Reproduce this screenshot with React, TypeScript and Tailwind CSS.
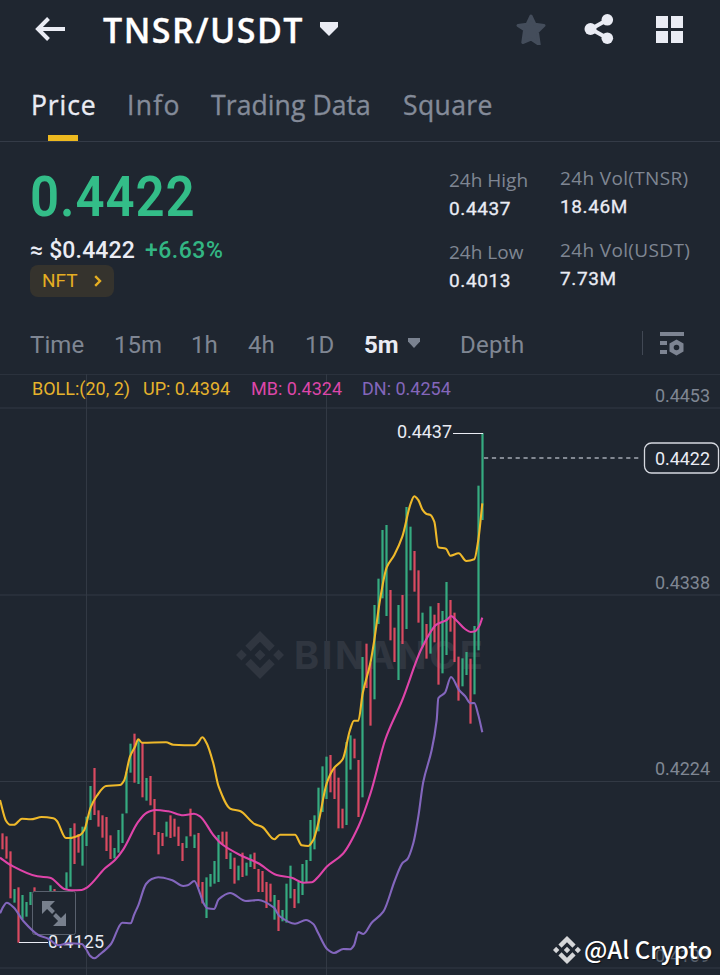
import React from "react";

type Candle = [up: 0 | 1, top: number, bottom: number];

// Candle extents in thirds of a pixel, measured from y = 720.
const EARLY: Record<number, Candle> = {
  0: [0, 340, 388], 1: [0, 349, 416], 2: [0, 394, 535], 3: [1, 507, 548], 4: [0, 502, 668],
  5: [1, 525, 598], 6: [1, 546, 590], 7: [1, 516, 555], 8: [0, 502, 530], 12: [1, 496, 520],
  13: [0, 507, 520], 16: [1, 457, 510], 17: [1, 324, 500], 18: [0, 310, 432], 19: [0, 342, 398],
  20: [1, 320, 437], 21: [1, 290, 378], 22: [1, 198, 300], 23: [0, 144, 285], 24: [0, 271, 320],
  25: [0, 286, 353], 26: [0, 291, 393], 27: [0, 346, 417], 28: [1, 384, 415], 29: [1, 330, 398],
  30: [1, 281, 369], 31: [1, 155, 280], 32: [1, 71, 158], 33: [0, 41, 188], 34: [1, 60, 192],
  35: [0, 66, 232], 36: [1, 174, 242], 37: [0, 168, 256], 38: [0, 237, 345], 39: [0, 336, 403],
  40: [0, 339, 378], 41: [1, 305, 350], 42: [0, 286, 354], 43: [0, 296, 350], 44: [0, 320, 378],
  45: [0, 369, 423], 46: [1, 349, 384], 47: [0, 266, 349], 48: [1, 344, 384], 49: [0, 339, 502],
  50: [0, 486, 550], 51: [1, 472, 594], 52: [1, 462, 500], 53: [1, 423, 491], 54: [1, 345, 486],
  55: [0, 335, 373], 56: [0, 335, 417], 57: [1, 398, 447], 58: [0, 413, 491], 59: [1, 437, 481],
  60: [0, 398, 471], 61: [1, 428, 467], 62: [1, 403, 441], 63: [0, 398, 447], 64: [0, 447, 516],
  65: [0, 453, 516], 66: [0, 486, 564], 67: [0, 491, 545], 68: [1, 525, 599], 69: [0, 540, 633],
  70: [1, 570, 604], 71: [1, 491, 608], 72: [1, 437, 535], 73: [0, 507, 564], 74: [1, 486, 550],
  75: [1, 432, 525], 76: [1, 420, 486], 77: [1, 300, 423], 78: [1, 286, 388], 79: [1, 203, 334],
  80: [1, 139, 276], 81: [1, 110, 237], 82: [0, 105, 217], 83: [0, 144, 237], 84: [0, 173, 325],
  85: [0, 266, 325], 86: [1, 66, 315], 87: [1, 46, 149], 88: [0, 56, 115], 89: [0, 120, 291],
  90: [1, -189, 232],
};

// Candle extents in thirds of a pixel, measured from y = 480.
const LATE: Record<number, Candle> = {
  91: [0, 491, 624], 92: [0, 550, 737], 93: [1, 375, 658], 94: [1, 296, 432], 95: [1, 150, 355],
  96: [1, 135, 408], 97: [0, 330, 481], 98: [0, 443, 546], 99: [1, 375, 600], 100: [0, 345, 492],
  101: [1, 81, 447], 102: [1, 140, 271], 103: [0, 213, 335], 104: [0, 271, 428], 105: [1, 398, 500],
  106: [0, 432, 536], 107: [1, 379, 521], 108: [0, 404, 487], 109: [0, 369, 614], 110: [1, 393, 580],
  111: [1, 306, 525], 112: [0, 360, 455], 113: [0, 398, 546], 114: [0, 530, 662], 115: [1, 535, 619],
  116: [1, 516, 585], 117: [0, 536, 731], 118: [1, 438, 643], 119: [1, 17, 511], 120: [1, -141, 120],
};

const UPPER =
  "0,800 6,820.7 10,824.7 14,824.7 22,818.7 30.7,819.3 41.7,817 53.3,818.3 56.7,820.7 66,838 69.3,838 80,835 84.3,830 90.7,807.3 96.7,796 106,786 120,785 124,780.7 130,756.7 135,746.7 138.3,739.3 142,742.7 166,742.3 173.3,744.7 194.3,745.3 198,742.7 202.3,737.3 206.7,743.3 213.3,763.3 218.7,786.7 230.3,808.7 240,811 255,824.3 262.3,827 274.3,839.3 280,834.7 295,834.7 301.7,845.3 308.3,846 313.3,840 318.3,823.3 326.7,783.3 334.3,767.7 342.7,759.3 350,730 354,720.7 358.3,720.7 362.7,693.3 370.3,663.3 374.3,640 380,600 386.7,567.3 394.3,555 402.3,536.7 410.7,503.3 414.3,496.3 418.3,500 422.3,509.3 426.7,514 430,514.7 434.3,521.7 438.3,547.3 446,548.7 450.3,555.7 458.7,553.3 466.3,561 474.3,559.3 478.3,540 482.3,503.3";
const MIDDLE =
  "0,857.7 10,864.7 37.3,876.3 50,877.7 65,889.3 71.7,890.3 81.7,890 87.3,887.3 105,868.3 115,860 123.3,849.3 138.3,821.7 146.7,812.7 155,810 168.3,811.3 183.3,815.3 194,813.7 200,816.3 213.3,835 221.7,844 240,855 258.3,863.3 276.7,875 291.7,877.7 303.3,882.7 311.7,882.3 318.3,876.7 326.7,866.7 342.7,854 358.3,826.7 370.7,792.7 385.3,739.5 402.3,700 421.7,648.3 436.7,624.3 446.7,620 451,616 456.7,620.7 465,629 470.7,632 475,631.3 479.3,626 482.3,617.7";
const LOWER =
  "0,913.3 3.3,906.7 6.7,902.7 14,907.7 23.3,921 38.3,935 48.3,938.7 58.3,945.3 68.3,943.3 81.7,944 86,949 90,955.7 94.3,958.3 100,954.3 111,944 122.3,922.7 130.7,923.3 134,915 138.3,905.3 146,884 151.7,879 158.3,877.3 171.7,880 183.3,886 187.7,885.3 194.3,881 200,893.3 203.3,902.7 207.3,908.3 214,909 218.7,899.3 230,893 246,901 258.3,900 274,907.7 279.3,916 295,923.7 306,920 313.3,924 318.3,933.3 327.3,949.3 334,953 343.3,949 350,949.3 354,945.3 358.3,932 363.3,934 371.7,922.7 383.3,911.7 395,880 402.7,862.7 407.3,859.3 413.3,843.3 418.3,816.7 423.3,781.7 431.7,750 436.7,720 438.3,698.3 445,692.7 451,677 459,690 465,696 470.7,703.3 474.3,703 478.3,715 482.3,732.3";

// Turns a list of points into a softly curved path.
function smooth(list: string) {
  const p = list.split(" ").map((s) => s.split(",").map(Number));
  let d = `M${p[0][0]} ${p[0][1]}`;
  for (let i = 0; i < p.length - 1; i++) {
    const a = p[Math.max(i - 1, 0)];
    const b = p[i];
    const c = p[i + 1];
    const e = p[Math.min(i + 2, p.length - 1)];
    const dx = (c[0] - b[0]) / 3;
    const slope = (q: number[], r: number[], m: number[]) => {
      const s1 = (m[1] - q[1]) / (m[0] - q[0] || 1);
      const s2 = (r[1] - m[1]) / (r[0] - m[0] || 1);
      return s1 * s2 <= 0 ? 0 : (2 * s1 * s2) / (s1 + s2);
    };
    const straight = (c[1] - b[1]) / (c[0] - b[0]);
    const m1 = i === 0 ? straight : slope(a, c, b);
    const m2 = i === p.length - 2 ? straight : slope(b, e, c);
    d += `C${b[0] + dx} ${b[1] + m1 * dx} ${c[0] - dx} ${c[1] - m2 * dx} ${c[0]} ${c[1]}`;
  }
  return d;
}

function Candles({ data, base }: { data: Record<number, Candle>; base: number }) {
  return (
    <>
      {Object.entries(data).map(([i, [up, top, bottom]]) => (
        <rect
          key={i}
          x={1.4 + Number(i) * 4}
          y={base + top / 3}
          width={2.2}
          height={(bottom - top) / 3}
          fill={up ? "#35ab80" : "#da4a60"}
        />
      ))}
    </>
  );
}

function BinanceMark({ className }: { className: string }) {
  return (
    <svg viewBox="0 0 126.6 126.6" className={className} fill="currentColor">
      <path d="M38.7 53.2 63.3 28.6 87.9 53.2 102.2 38.9 63.3 0 24.4 38.9zM0 63.3 14.3 49 28.6 63.3 14.3 77.6zM38.7 73.4 63.3 98 87.9 73.4 102.2 87.7 63.3 126.6 24.4 87.7zM98 63.3 112.3 49 126.6 63.3 112.3 77.6zM77.8 63.3 63.3 48.8 48.8 63.3 63.3 77.8z" />
    </svg>
  );
}

function Header() {
  return (
    <header className="flex h-[62px] items-center pl-[34px] text-[#eaecf4]">
      <svg viewBox="0 0 32 26" className="-mt-1 h-[26px] w-8 shrink-0" fill="none" stroke="currentColor" strokeWidth="4">
        <path d="M14.500 2.500 4 13l10.500 10.500M3.500 13H31" />
      </svg>
      <h1 className="-mt-0.5 ml-[37px] w-[202px] whitespace-nowrap font-['Open_Sans',sans-serif] text-[34px] font-semibold leading-none tracking-[1.5px] text-white [-webkit-text-stroke:0.3px]">
        TNSR/USDT
      </h1>
      <svg viewBox="0 0 18 14" className="-mt-1 ml-[15px] h-[14px] w-[18px]" fill="currentColor">
        <path d="M0 0h18v5l-9 9-9-9z" />
      </svg>
      <svg viewBox="0 0 30 31" className="-mt-1 ml-[178px] h-[31px] w-[30px]" fill="#444d5b" stroke="#444d5b" strokeWidth="3" strokeLinejoin="round">
        <path d="m15 2 4 8.300 9 1.200-6.600 6.300 1.800 12.700L15 25l-8.200 3.500 1.800-12.700L2 11.500l9-1.200z" />
      </svg>
      <svg viewBox="0 0 30 30" className="-mt-1 ml-[38px] h-[30px] w-[30px]" fill="currentColor">
        <path d="M23 6 7 15l16 9" fill="none" stroke="currentColor" strokeWidth="4" />
        <circle cx="6.500" cy="15" r="6" />
        <circle cx="23.300" cy="5.800" r="5.800" />
        <circle cx="23.300" cy="24.200" r="5.800" />
      </svg>
      <div className="-mt-1 ml-[42px] grid grid-cols-2 gap-[3px]">
        {[0, 1, 2, 3].map((i) => (
          <span key={i} className="size-3 bg-[#eaecf4]" />
        ))}
      </div>
    </header>
  );
}

function Tabs() {
  return (
    <nav className="flex h-[80px] border-b border-[#343b47] pl-[31px] pt-[25px] font-['Open_Sans',sans-serif] text-[26.5px] font-medium leading-9 text-[#848b99] [-webkit-text-stroke:0.35px]">
      <div className="flex w-[96px] flex-col text-[#eaecf4]">
        <span className="whitespace-nowrap tracking-[0.9px]">Price</span>
        <span className="ml-[17px] mt-[12px] h-[6px] w-[30px] shrink-0 bg-[#edb91f]" />
      </div>
      <span className="w-[84px] tracking-[1.3px]">Info</span>
      <span className="w-[192px] whitespace-nowrap tracking-[0.1px]">Trading Data</span>
      <span className="tracking-[0.4px]">Square</span>
    </nav>
  );
}

function Stat({ label, value }: { label: string; value: string }) {
  return (
    <div className="whitespace-nowrap">
      <div className="font-['Open_Sans',sans-serif] text-[19px] leading-7 text-[#7f8693]">{label}</div>
      <div className="mt-px font-['Roboto',sans-serif] text-[19px] leading-7 tracking-[0.6px] text-[#eaecf4] [-webkit-text-stroke:0.3px]">{value}</div>
    </div>
  );
}

function Summary() {
  return (
    <section className="flex h-[174px] pl-[30px]">
      <div className="w-[419px] pt-[25px] font-['Roboto',sans-serif] font-medium">
        <div className="w-max origin-left scale-x-[.91] text-[56px] font-semibold leading-[60px] tracking-[1px] text-[#33bd88]">0.4422</div>
        <div className="mt-[9px] flex gap-[10px] whitespace-nowrap text-[23px] leading-[30px]">
          <span className="tracking-[0.15px] text-[#eaecf4]">≈ $0.4422</span>
          <span className="tracking-[0.5px] text-[#33b583]">+6.63%</span>
        </div>
        <div className="-mt-px flex h-8 w-[84px] items-center rounded-lg bg-[#35332d] pl-3 text-[19px] font-normal text-[#e5ae22]">
          NFT
          <svg viewBox="0 0 8 12" className="ml-[16px] h-3 w-2" fill="none" stroke="currentColor" strokeWidth="2.400">
            <path d="m1.200 1.200 4.800 4.800-4.800 4.800" />
          </svg>
        </div>
      </div>
      <div className="flex w-[111px] flex-col gap-[15px] pt-[24px]">
        <Stat label="24h High" value="0.4437" />
        <Stat label="24h Low" value="0.4013" />
      </div>
      <div className="flex flex-col gap-[15px] pt-[22px] [&>div>div:first-child]:tracking-[0.35px]">
        <Stat label="24h Vol(TNSR)" value="18.46M" />
        <Stat label="24h Vol(USDT)" value="7.73M" />
      </div>
    </section>
  );
}

function Intervals() {
  return (
    <div className="flex h-[58px] items-center pl-[30px] font-['Roboto',sans-serif] text-[24px] text-[#7f8693]">
      <span className="w-[84px] tracking-[0.1px]">Time</span>
      <span className="w-[77px]">15m</span>
      <span className="w-[57px]">1h</span>
      <span className="w-[57px]">4h</span>
      <span className="w-[59px]">1D</span>
      <span className="w-[44px] font-bold text-[#eaecf4]">5m</span>
      <svg viewBox="0 0 12 10" className="-mt-1 h-[10px] w-3" fill="#7a8290">
        <path d="M0 0h12v3.500L6 10 0 3.500z" />
      </svg>
      <span className="ml-[40px] w-[182px] tracking-[0.3px]">Depth</span>
      <span className="-mt-1 h-6 w-px bg-[#414854]" />
      <svg viewBox="0 0 24 24" className="-mt-[3px] ml-[17px] size-6" fill="#7d8492">
        <path d="M0 0h24v4H0zM0 9h7v4H0zM0 18h7v4H0z" />
        <path fillRule="evenodd" d="m16.500 7.500 7 4v8l-7 4-7-4v-8zm0 5.200a2.800 2.800 0 1 0 0 5.600 2.800 2.800 0 0 0 0-5.600z" />
      </svg>
    </div>
  );
}

function Chart() {
  return (
    <section className="relative h-[601px] overflow-hidden font-['Roboto',sans-serif] text-[18px]">
      <svg viewBox="0 374 720 601" className="block h-[601px] w-[720px]">
        <path d="M0 374H720" stroke="#2b323d" strokeWidth="2" />
        <path d="M0 408H720M0 595H720M0 781.500H720M0 968H720M86.500 374V975M326.500 374V975" stroke="#323944" strokeWidth="1" />
      </svg>

      <div className="absolute left-[236px] top-[257px] flex items-center text-[#303640]">
        <BinanceMark className="size-[48px]" />
        <span className="ml-[10px] font-['Inter',sans-serif] text-[38px] font-bold leading-none tracking-[2.6px]">BINANCE</span>
      </div>

      <svg viewBox="0 374 720 601" className="absolute inset-0 h-[601px] w-[720px]">
        <Candles data={EARLY} base={720} />
        <Candles data={LATE} base={480} />
        <path d="M453 433.500H483M19 942.500H48" stroke="#eaecf4" strokeWidth="1.200" />
        <path d="M484 458H641" stroke="#a4a9b2" strokeWidth="1.500" strokeDasharray="4.200 3.700" />
        <rect x="32.500" y="891.500" width="43" height="43" rx="2" fill="#1f2630" stroke="#59616e" />
        <g fill="#78808d" stroke="#78808d">
          <path d="M42 901h13l-13 13zM66 926H53l13-13z" stroke="none" />
          <path d="m45 904 8.500 8.500M63 923l-8.500-8.500" strokeWidth="4" />
        </g>
        <text x="48" y="948" fontSize="18" textLength="56" fill="#eaecf4">0.4125</text>
        <g fill="none" strokeWidth="2.100" strokeLinejoin="round">
          <path d={smooth(LOWER)} stroke="#8366bd" />
          <path d={smooth(MIDDLE)} stroke="#df44a9" />
          <path d={smooth(UPPER)} stroke="#efb92a" />
        </g>
        <text x="397" y="438" fontSize="18" textLength="55" fill="#eaecf4">0.4437</text>
        <g fontSize="18" fill="#7f8693">
          <text x="655" y="402" textLength="55">0.4453</text>
          <text x="655" y="589" textLength="55">0.4338</text>
          <text x="655" y="775" textLength="55">0.4224</text>
          <text x="655" y="962" textLength="55" fill="#59616d">0.4109</text>
        </g>
        <rect x="644.500" y="443" width="74" height="30" rx="7" fill="#1f2630" stroke="#d5d8df" strokeWidth="1.300" />
        <text x="655" y="465" fontSize="18" textLength="55" fill="#eaecf4">0.4422</text>
      </svg>

      <div className="absolute left-8 top-[4px] flex whitespace-nowrap leading-[22px] text-[#e6b32c]">
        <span className="w-[111px]">BOLL:(20, 2)</span>
        <span className="w-[108px]">UP: 0.4394</span>
        <span className="w-[111px] text-[#dd46a8]">MB: 0.4324</span>
        <span className="text-[#8466bb]">DN: 0.4254</span>
      </div>

      <div className="absolute left-[553px] top-[562px] flex items-center text-white [text-shadow:1px_1px_1px_#0009]">
        <BinanceMark className="size-[28px] text-[#d5d6d8]" />
        <span className="-mt-0.5 ml-[3px] whitespace-nowrap font-['Noto_Sans_CJK_SC','Noto_Sans',sans-serif] text-[24px] font-medium leading-[30px]">@Al Crypto</span>
      </div>
    </section>
  );
}

export default function App() {
  return (
    <main className="h-[975px] w-[720px] overflow-hidden bg-[#1f2630]">
      <Header />
      <Tabs />
      <Summary />
      <Intervals />
      <Chart />
    </main>
  );
}
